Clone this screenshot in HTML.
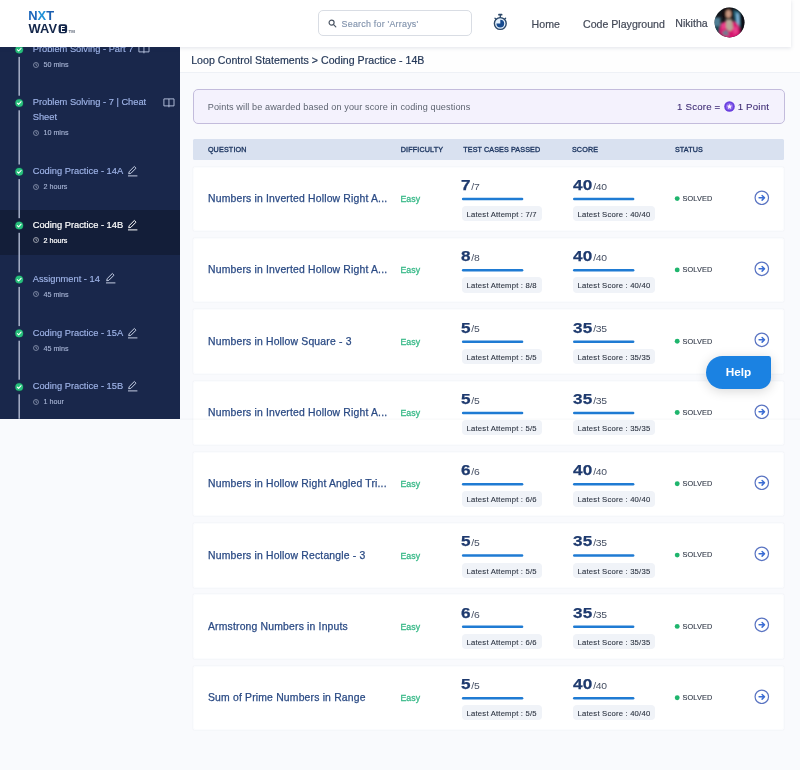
<!DOCTYPE html><html><head><meta charset="utf-8"><title>Coding Practice - 14B</title><style>
*{box-sizing:border-box;margin:0;padding:0}
html,body{width:800px;height:770px;overflow:hidden}
body{background:#f9fafd;font-family:"Liberation Sans",Arial,sans-serif;position:relative;color:#1e3a5f}
.abs{position:absolute}
#root{position:absolute;left:0;top:0;width:800px;height:770px;will-change:transform}
.nav{font-size:10.6px;color:#434957;white-space:nowrap;-webkit-text-stroke:.2px #434957}
#bread{left:0;top:0;width:800px;height:72.6px;background:#fefefe;border-bottom:1px solid #eef1f6}
#bread span{position:absolute;left:191.2px;top:53.8px;font-size:10.6px;color:#243757;white-space:nowrap;letter-spacing:.02px;-webkit-text-stroke:.18px #243757}
#hdr{left:0;top:0;width:791px;height:46.8px;background:#fff;box-shadow:0 1px 4px rgba(30,50,90,.13)}
#side{left:0;top:46px;width:180px;height:372.8px;background:#19274b;overflow:hidden}
#side .act{position:absolute;left:0;top:164.2px;width:180px;height:45.3px;background:#131e39}
#side .line{position:absolute;left:18.5px;width:1.4px;background:#a6b0c8}
.dot{position:absolute;left:15.3px;width:7.8px;height:7.8px;border-radius:50%;background:#27c07c;box-shadow:0 0 0 1px rgba(20,110,80,.55)}
.st{position:absolute;left:32.7px;font-size:9.3px;color:#9fb4e8;white-space:nowrap;line-height:15px}
.st{-webkit-text-stroke:.15px #9fb4e8}.st.on{color:#fff;-webkit-text-stroke:.2px #fff}
.tm{position:absolute;left:43.4px;font-size:7.2px;color:#a9b6d6;white-space:nowrap}
.tm{-webkit-text-stroke:.12px #a9b6d6}.tm.on{color:#fff;-webkit-text-stroke:.2px #fff}
#banner{left:192.7px;top:89.2px;width:592.2px;height:34.7px;background:#f4f2fd;border:1px solid #c3bcdc;border-radius:5px}
#banner .l{position:absolute;left:14.1px;top:12.2px;font-size:9.1px;color:#5d6470;white-space:nowrap;letter-spacing:.11px}
#banner .r{position:absolute;right:14.8px;top:10.8px;font-size:9.7px;color:#3f2d75;white-space:nowrap;letter-spacing:.18px;-webkit-text-stroke:.1px #3f2d75}
#th{left:192.7px;top:139px;width:591.5px;height:21px;background:#d9e1f0;border-radius:1.5px}
#th span{position:absolute;top:6.1px;font-size:7.2px;color:#1c3560;letter-spacing:.15px;white-space:nowrap;font-weight:400;-webkit-text-stroke:.32px #1c3560}
.row{position:absolute;left:192.7px;width:591.5px;height:64.5px;background:#fff;border:1px solid #fbfcfe;border-radius:2px;box-shadow:0 0 2px rgba(40,60,100,.07)}
.q{position:absolute;left:14.3px;top:25.6px;font-size:10.4px;color:#2a4a84;white-space:nowrap;letter-spacing:.18px;-webkit-text-stroke:.25px #2a4a84}
.easy{position:absolute;left:206.8px;top:26.5px;font-size:8.8px;color:#38b988;-webkit-text-stroke:.3px #38b988}
.big{position:absolute;top:7.4px;transform:scaleX(1.14);transform-origin:0 0;font-size:15px;font-weight:700;color:#1e3a6e;white-space:nowrap;line-height:19px;letter-spacing:.3px;-webkit-text-stroke:.25px #1e3a6e}
.big small{font-size:9.1px;font-weight:400;color:#454f63;letter-spacing:-.25px;position:relative;top:-.2px;margin-left:.4px;-webkit-text-stroke:0}
.bar{position:absolute;top:30.1px;height:2.5px;width:61.3px;background:#1f78cf;border-radius:2px}
.pill{position:absolute;top:38.6px;height:15.2px;background:#f0f3f8;border-radius:4px;font-size:7.7px;color:#2b3340;line-height:17px;padding:0 5px;white-space:nowrap;letter-spacing:.2px;-webkit-text-stroke:.1px #2b3340}
.sd{position:absolute;left:480.7px;top:28.6px;width:5px;height:5px;border-radius:50%;background:#1fb56d}
.sv{position:absolute;left:488.7px;top:26.4px;font-size:7.3px;color:#333b4a;letter-spacing:.15px;-webkit-text-stroke:.12px #333b4a}
.go{position:absolute;left:560.6px;top:22.1px;width:15.6px;height:15.6px}
#help{left:706px;top:355.7px;width:64.9px;height:33.2px;background:#1b82e2;border-radius:17px 2.5px 12px 17px;color:#fff;font-weight:700;font-size:11.8px;text-align:center;line-height:33.6px;box-shadow:0 2px 12px rgba(0,0,0,.16)}
</style></head><body><div id="root">
<div id="bread" class="abs"><span>Loop Control Statements &gt; Coding Practice - 14B</span></div>
<div id="side" class="abs"><div class="act"></div><svg class="abs" style="left:0;top:0" width="40" height="373" viewBox="0 0 40 373"><rect x="18.45" y="0.0" width="1.5" height="-3.7" fill="#a6b0c8"/><rect x="18.45" y="10.9" width="1.5" height="38.8" fill="#a6b0c8"/><rect x="18.45" y="64.3" width="1.5" height="54.2" fill="#a6b0c8"/><rect x="18.45" y="133.1" width="1.5" height="39.1" fill="#a6b0c8"/><rect x="18.45" y="186.8" width="1.5" height="39.5" fill="#a6b0c8"/><rect x="18.45" y="240.9" width="1.5" height="39.2" fill="#a6b0c8"/><rect x="18.45" y="294.7" width="1.5" height="39.0" fill="#a6b0c8"/><rect x="18.45" y="348.3" width="1.5" height="24.5" fill="#a6b0c8"/><circle cx="19.2" cy="3.6" r="4.5" fill="#145c4c" opacity=".55"/><circle cx="19.2" cy="3.6" r="3.85" fill="#27c07c"/><path d="M17.3 3.7l1.3 1.3 2.5-2.7" fill="none" stroke="#fff" stroke-width="1.05" stroke-linecap="round" stroke-linejoin="round"/><circle cx="19.2" cy="57.0" r="4.5" fill="#145c4c" opacity=".55"/><circle cx="19.2" cy="57.0" r="3.85" fill="#27c07c"/><path d="M17.3 57.1l1.3 1.3 2.5-2.7" fill="none" stroke="#fff" stroke-width="1.05" stroke-linecap="round" stroke-linejoin="round"/><circle cx="19.2" cy="125.8" r="4.5" fill="#145c4c" opacity=".55"/><circle cx="19.2" cy="125.8" r="3.85" fill="#27c07c"/><path d="M17.3 125.9l1.3 1.3 2.5-2.7" fill="none" stroke="#fff" stroke-width="1.05" stroke-linecap="round" stroke-linejoin="round"/><circle cx="19.2" cy="179.5" r="4.5" fill="#145c4c" opacity=".55"/><circle cx="19.2" cy="179.5" r="3.85" fill="#27c07c"/><path d="M17.3 179.6l1.3 1.3 2.5-2.7" fill="none" stroke="#fff" stroke-width="1.05" stroke-linecap="round" stroke-linejoin="round"/><circle cx="19.2" cy="233.6" r="4.5" fill="#145c4c" opacity=".55"/><circle cx="19.2" cy="233.6" r="3.85" fill="#27c07c"/><path d="M17.3 233.7l1.3 1.3 2.5-2.7" fill="none" stroke="#fff" stroke-width="1.05" stroke-linecap="round" stroke-linejoin="round"/><circle cx="19.2" cy="287.4" r="4.5" fill="#145c4c" opacity=".55"/><circle cx="19.2" cy="287.4" r="3.85" fill="#27c07c"/><path d="M17.3 287.5l1.3 1.3 2.5-2.7" fill="none" stroke="#fff" stroke-width="1.05" stroke-linecap="round" stroke-linejoin="round"/><circle cx="19.2" cy="341.0" r="4.5" fill="#145c4c" opacity=".55"/><circle cx="19.2" cy="341.0" r="3.85" fill="#27c07c"/><path d="M17.3 341.1l1.3 1.3 2.5-2.7" fill="none" stroke="#fff" stroke-width="1.05" stroke-linecap="round" stroke-linejoin="round"/></svg><div class="st" style="top:-4.0px">Problem Solving - Part 7</div><svg class="abs" style="left:33.2px;top:15.5px" width="6" height="6" viewBox="0 0 7 7" fill="none" stroke="#c4cde2" stroke-width="0.75" opacity=".85"><circle cx="3.5" cy="3.5" r="2.9"/><path d="M3.5 1.8V3.6L4.6 4.2"/></svg><div class="tm" style="top:13.9px">50 mins</div><svg class="abs" style="left:138px;top:-2.2px" width="12" height="11" viewBox="0 0 12 11" fill="none" stroke="#bcc7e2" stroke-width="0.9" shape-rendering="geometricPrecision"><path d="M0.9 0.9H11V7.9H0.9zM5.95 0.9V9.3"/></svg><div class="st" style="top:49.4px">Problem Solving - 7 | Cheat<br>Sheet</div><svg class="abs" style="left:33.2px;top:83.7px" width="6" height="6" viewBox="0 0 7 7" fill="none" stroke="#c4cde2" stroke-width="0.75" opacity=".85"><circle cx="3.5" cy="3.5" r="2.9"/><path d="M3.5 1.8V3.6L4.6 4.2"/></svg><div class="tm" style="top:82.1px">10 mins</div><svg class="abs" style="left:162.5px;top:51.8px" width="12" height="11" viewBox="0 0 12 11" fill="none" stroke="#bcc7e2" stroke-width="0.9" shape-rendering="geometricPrecision"><path d="M0.9 0.9H11V7.9H0.9zM5.95 0.9V9.3"/></svg><div class="st" style="top:118.2px">Coding Practice - 14A</div><svg class="abs" style="left:33.2px;top:137.7px" width="6" height="6" viewBox="0 0 7 7" fill="none" stroke="#c4cde2" stroke-width="0.75" opacity=".85"><circle cx="3.5" cy="3.5" r="2.9"/><path d="M3.5 1.8V3.6L4.6 4.2"/></svg><div class="tm" style="top:136.1px">2 hours</div><svg class="abs" style="left:127px;top:118.9px" width="11" height="12" viewBox="0 0 11 12" fill="none" stroke="#c4cde2" stroke-width="1" stroke-linejoin="round"><path d="M2.2 6.6 7.3 1.5 9 3.2 3.9 8.3 1.7 8.8z"/><path d="M1 10.9h9.4" /></svg><div class="st on" style="top:171.9px">Coding Practice - 14B</div><svg class="abs" style="left:33.2px;top:191.4px" width="6" height="6" viewBox="0 0 7 7" fill="none" stroke="#fff" stroke-width="0.75" opacity=".85"><circle cx="3.5" cy="3.5" r="2.9"/><path d="M3.5 1.8V3.6L4.6 4.2"/></svg><div class="tm on" style="top:189.8px">2 hours</div><svg class="abs" style="left:127px;top:172.6px" width="11" height="12" viewBox="0 0 11 12" fill="none" stroke="#fff" stroke-width="1" stroke-linejoin="round"><path d="M2.2 6.6 7.3 1.5 9 3.2 3.9 8.3 1.7 8.8z"/><path d="M1 10.9h9.4" /></svg><div class="st" style="top:225.6px">Assignment - 14</div><svg class="abs" style="left:33.2px;top:245.1px" width="6" height="6" viewBox="0 0 7 7" fill="none" stroke="#c4cde2" stroke-width="0.75" opacity=".85"><circle cx="3.5" cy="3.5" r="2.9"/><path d="M3.5 1.8V3.6L4.6 4.2"/></svg><div class="tm" style="top:243.5px">45 mins</div><svg class="abs" style="left:104.5px;top:226.3px" width="11" height="12" viewBox="0 0 11 12" fill="none" stroke="#c4cde2" stroke-width="1" stroke-linejoin="round"><path d="M2.2 6.6 7.3 1.5 9 3.2 3.9 8.3 1.7 8.8z"/><path d="M1 10.9h9.4" /></svg><div class="st" style="top:279.8px">Coding Practice - 15A</div><svg class="abs" style="left:33.2px;top:299.3px" width="6" height="6" viewBox="0 0 7 7" fill="none" stroke="#c4cde2" stroke-width="0.75" opacity=".85"><circle cx="3.5" cy="3.5" r="2.9"/><path d="M3.5 1.8V3.6L4.6 4.2"/></svg><div class="tm" style="top:297.7px">45 mins</div><svg class="abs" style="left:127px;top:280.5px" width="11" height="12" viewBox="0 0 11 12" fill="none" stroke="#c4cde2" stroke-width="1" stroke-linejoin="round"><path d="M2.2 6.6 7.3 1.5 9 3.2 3.9 8.3 1.7 8.8z"/><path d="M1 10.9h9.4" /></svg><div class="st" style="top:333.4px">Coding Practice - 15B</div><svg class="abs" style="left:33.2px;top:352.9px" width="6" height="6" viewBox="0 0 7 7" fill="none" stroke="#c4cde2" stroke-width="0.75" opacity=".85"><circle cx="3.5" cy="3.5" r="2.9"/><path d="M3.5 1.8V3.6L4.6 4.2"/></svg><div class="tm" style="top:351.3px">1 hour</div><svg class="abs" style="left:127px;top:334.1px" width="11" height="12" viewBox="0 0 11 12" fill="none" stroke="#c4cde2" stroke-width="1" stroke-linejoin="round"><path d="M2.2 6.6 7.3 1.5 9 3.2 3.9 8.3 1.7 8.8z"/><path d="M1 10.9h9.4" /></svg></div>
<div id="hdr" class="abs">
<svg class="abs" style="left:27px;top:10px" width="52" height="26" viewBox="0 0 52 26" font-family="Liberation Sans, Arial, sans-serif" font-weight="700">
<text x="1.3" y="9.9" font-size="12" textLength="25.8" lengthAdjust="spacingAndGlyphs" fill="#1b66bb">N<tspan fill="#2292d8">X</tspan><tspan fill="#1b5fb0">T</tspan></text>
<text x="1.6" y="22.8" font-size="12" textLength="28.4" lengthAdjust="spacingAndGlyphs" fill="#13264a">WAV</text>
<rect x="31.6" y="14.3" width="8.5" height="8.9" rx="2.2" fill="#13264a"/>
<text x="33.5" y="21.7" font-size="8.2" textLength="4.7" lengthAdjust="spacingAndGlyphs" fill="#fff">E</text>
<text x="41.5" y="22.8" font-size="3.4" textLength="6.3" lengthAdjust="spacingAndGlyphs" fill="#5a6475">TM</text>
</svg>
<div class="abs" style="left:318px;top:10px;width:153.5px;height:26.3px;border:1px solid #d9dde4;border-radius:5px;background:#fff"></div>
<svg class="abs" style="left:327.5px;top:18.7px" width="9" height="9" viewBox="0 0 9 9" fill="none" stroke="#4b5563" stroke-width="1.2" stroke-linecap="round"><circle cx="3.6" cy="3.6" r="2.5"/><path d="M5.6 5.6 7.8 7.8"/></svg>
<div class="abs" style="left:341.6px;top:18.8px;font-size:8.9px;color:#8394ad;white-space:nowrap;letter-spacing:.23px;-webkit-text-stroke:.15px #8394ad">Search for 'Arrays'</div>
<svg class="abs" style="left:492px;top:12px" width="17" height="20" viewBox="0 0 17 20"><circle cx="8.3" cy="11.5" r="5.9" fill="#e4f1fd" stroke="#2c4869" stroke-width="1.4"/><rect x="6.15" y="1.8" width="4.3" height="1.8" rx=".7" fill="#2c4869"/><path d="M8.3 3.2v2.2M3 6.2l1.2 1.2M13.6 6.2l-1.2 1.2" stroke="#2c4869" stroke-width="1.3" stroke-linecap="round" fill="none"/><path d="M8.3 11.6V7.7a3.9 3.9 0 1 1-3.9 3.9z" fill="#174b8f"/></svg>
<div class="abs nav" style="left:531.6px;top:17.6px">Home</div>
<div class="abs nav" style="left:583px;top:17.6px">Code Playground</div>
<div class="abs nav" style="left:675.3px;top:17.2px">Nikitha</div>
<svg class="abs" style="left:714.2px;top:6.5px" width="31" height="31" viewBox="0 0 31 31"><defs><clipPath id="av"><circle cx="15.5" cy="15.5" r="14.9"/></clipPath><filter id="bl" x="-20%" y="-20%" width="140%" height="140%"><feGaussianBlur stdDeviation="0.9"/></filter></defs><g clip-path="url(#av)"><rect width="31" height="31" fill="#11161b"/><g filter="url(#bl)"><rect x="-1" y="10.5" width="7.5" height="9" fill="#4f7d93"/><rect x="-1" y="19" width="7" height="8" fill="#1f4656"/><path d="M19.5 3 25.5 4.5 26.5 21 21 20z" fill="#2a6a82"/><path d="M22.3 6l2.6.8.5 11.2-2.4-.4z" fill="#86bce2"/><rect x="26.3" y="6" width="6" height="22" fill="#0b0e12"/><ellipse cx="14.3" cy="6.5" rx="5.4" ry="6.2" fill="#1a1110"/><ellipse cx="14.5" cy="7" rx="2.8" ry="4" fill="#c69680"/><path d="M5.5 27C5 18 8.5 14.2 12.5 14.2l5.5 0c5 0 8.5 5 8 14l-6 4H12z" fill="#d6186f"/><path d="M12 12.5h6l1.2 9.5-3.7 2.5-3.5-3.5z" fill="#b7a898"/><path d="M8 25l5-2.6 2.2 6H9.5z" fill="#5f8d98" opacity=".85"/><path d="M7 16.5l4-1.5 1 6-4 2z" fill="#e8408c"/><path d="M18.5 21l4.5-2 1 6-4 3z" fill="#e8408c"/></g></g></svg>
</div>
<div id="banner" class="abs"><div class="l">Points will be awarded based on your score in coding questions</div><div class="r">1 Score = <svg width="11" height="11" viewBox="0 0 11 11" style="vertical-align:-2.3px;margin-left:.5px"><circle cx="5.5" cy="5.5" r="5.3" fill="#6a40de"/><circle cx="5.5" cy="5.5" r="3.5" fill="#8c68ee"/><path d="M5.5 2.9l.8 1.7 1.8.2-1.3 1.3.3 1.8-1.6-.9-1.6.9.3-1.8L2.9 4.8l1.8-.2z" fill="#fdeeff"/></svg> 1 Point</div></div>
<div id="th" class="abs"><span style="left:15.2px">QUESTION</span><span style="left:208px">DIFFICULTY</span><span style="left:270.6px;letter-spacing:.1px">TEST CASES PASSED</span><span style="left:379.2px">SCORE</span><span style="left:482.2px">STATUS</span></div>
<div class="row" style="top:166.6px"><div class="q">Numbers in Inverted Hollow Right A...</div><div class="easy">Easy</div>
<div class="big" style="left:267.6px">7<small>/7</small></div><div class="pill" style="left:267.9px">Latest Attempt : 7/7</div>
<div class="big" style="left:379.3px">40<small>/40</small></div><div class="pill" style="left:378.9px">Latest Score : 40/40</div>
<div class="sv">SOLVED</div>
<svg class="go" viewBox="0 0 16 16" fill="none" stroke="#5a74c2" stroke-width="1.25" stroke-linecap="round" stroke-linejoin="round"><circle cx="8" cy="8" r="6.9"/><path d="M5.2 8h5.2M8.3 5.6 10.8 8 8.3 10.4" stroke="#3a6cd4" stroke-width="1.5"/></svg></div>
<div class="row" style="top:237.9px"><div class="q">Numbers in Inverted Hollow Right A...</div><div class="easy">Easy</div>
<div class="big" style="left:267.6px">8<small>/8</small></div><div class="pill" style="left:267.9px">Latest Attempt : 8/8</div>
<div class="big" style="left:379.3px">40<small>/40</small></div><div class="pill" style="left:378.9px">Latest Score : 40/40</div>
<div class="sv">SOLVED</div>
<svg class="go" viewBox="0 0 16 16" fill="none" stroke="#5a74c2" stroke-width="1.25" stroke-linecap="round" stroke-linejoin="round"><circle cx="8" cy="8" r="6.9"/><path d="M5.2 8h5.2M8.3 5.6 10.8 8 8.3 10.4" stroke="#3a6cd4" stroke-width="1.5"/></svg></div>
<div class="row" style="top:309.2px"><div class="q">Numbers in Hollow Square - 3</div><div class="easy">Easy</div>
<div class="big" style="left:267.6px">5<small>/5</small></div><div class="pill" style="left:267.9px">Latest Attempt : 5/5</div>
<div class="big" style="left:379.3px">35<small>/35</small></div><div class="pill" style="left:378.9px">Latest Score : 35/35</div>
<div class="sv">SOLVED</div>
<svg class="go" viewBox="0 0 16 16" fill="none" stroke="#5a74c2" stroke-width="1.25" stroke-linecap="round" stroke-linejoin="round"><circle cx="8" cy="8" r="6.9"/><path d="M5.2 8h5.2M8.3 5.6 10.8 8 8.3 10.4" stroke="#3a6cd4" stroke-width="1.5"/></svg></div>
<div class="row" style="top:380.5px"><div class="q">Numbers in Inverted Hollow Right A...</div><div class="easy">Easy</div>
<div class="big" style="left:267.6px">5<small>/5</small></div><div class="pill" style="left:267.9px">Latest Attempt : 5/5</div>
<div class="big" style="left:379.3px">35<small>/35</small></div><div class="pill" style="left:378.9px">Latest Score : 35/35</div>
<div class="sv">SOLVED</div>
<svg class="go" viewBox="0 0 16 16" fill="none" stroke="#5a74c2" stroke-width="1.25" stroke-linecap="round" stroke-linejoin="round"><circle cx="8" cy="8" r="6.9"/><path d="M5.2 8h5.2M8.3 5.6 10.8 8 8.3 10.4" stroke="#3a6cd4" stroke-width="1.5"/></svg></div>
<div class="row" style="top:451.8px"><div class="q">Numbers in Hollow Right Angled Tri...</div><div class="easy">Easy</div>
<div class="big" style="left:267.6px">6<small>/6</small></div><div class="pill" style="left:267.9px">Latest Attempt : 6/6</div>
<div class="big" style="left:379.3px">40<small>/40</small></div><div class="pill" style="left:378.9px">Latest Score : 40/40</div>
<div class="sv">SOLVED</div>
<svg class="go" viewBox="0 0 16 16" fill="none" stroke="#5a74c2" stroke-width="1.25" stroke-linecap="round" stroke-linejoin="round"><circle cx="8" cy="8" r="6.9"/><path d="M5.2 8h5.2M8.3 5.6 10.8 8 8.3 10.4" stroke="#3a6cd4" stroke-width="1.5"/></svg></div>
<div class="row" style="top:523.1px"><div class="q">Numbers in Hollow Rectangle - 3</div><div class="easy">Easy</div>
<div class="big" style="left:267.6px">5<small>/5</small></div><div class="pill" style="left:267.9px">Latest Attempt : 5/5</div>
<div class="big" style="left:379.3px">35<small>/35</small></div><div class="pill" style="left:378.9px">Latest Score : 35/35</div>
<div class="sv">SOLVED</div>
<svg class="go" viewBox="0 0 16 16" fill="none" stroke="#5a74c2" stroke-width="1.25" stroke-linecap="round" stroke-linejoin="round"><circle cx="8" cy="8" r="6.9"/><path d="M5.2 8h5.2M8.3 5.6 10.8 8 8.3 10.4" stroke="#3a6cd4" stroke-width="1.5"/></svg></div>
<div class="row" style="top:594.4px"><div class="q">Armstrong Numbers in Inputs</div><div class="easy">Easy</div>
<div class="big" style="left:267.6px">6<small>/6</small></div><div class="pill" style="left:267.9px">Latest Attempt : 6/6</div>
<div class="big" style="left:379.3px">35<small>/35</small></div><div class="pill" style="left:378.9px">Latest Score : 35/35</div>
<div class="sv">SOLVED</div>
<svg class="go" viewBox="0 0 16 16" fill="none" stroke="#5a74c2" stroke-width="1.25" stroke-linecap="round" stroke-linejoin="round"><circle cx="8" cy="8" r="6.9"/><path d="M5.2 8h5.2M8.3 5.6 10.8 8 8.3 10.4" stroke="#3a6cd4" stroke-width="1.5"/></svg></div>
<div class="row" style="top:665.7px"><div class="q">Sum of Prime Numbers in Range</div><div class="easy">Easy</div>
<div class="big" style="left:267.6px">5<small>/5</small></div><div class="pill" style="left:267.9px">Latest Attempt : 5/5</div>
<div class="big" style="left:379.3px">40<small>/40</small></div><div class="pill" style="left:378.9px">Latest Score : 40/40</div>
<div class="sv">SOLVED</div>
<svg class="go" viewBox="0 0 16 16" fill="none" stroke="#5a74c2" stroke-width="1.25" stroke-linecap="round" stroke-linejoin="round"><circle cx="8" cy="8" r="6.9"/><path d="M5.2 8h5.2M8.3 5.6 10.8 8 8.3 10.4" stroke="#3a6cd4" stroke-width="1.5"/></svg></div>
<svg class="abs" style="left:0;top:0;pointer-events:none" width="800" height="770" viewBox="0 0 800 770"><rect x="180" y="418.6" width="620" height="1" fill="#1e2b4a" opacity=".035"/><rect x="461.9" y="197.8" width="61.4" height="2.5" rx="1.25" fill="#1f7bd3"/><rect x="573.0" y="197.8" width="61.4" height="2.5" rx="1.25" fill="#1f7bd3"/><circle cx="677.2" cy="198.6" r="2.45" fill="#1fb56d"/><rect x="461.9" y="269.1" width="61.4" height="2.5" rx="1.25" fill="#1f7bd3"/><rect x="573.0" y="269.1" width="61.4" height="2.5" rx="1.25" fill="#1f7bd3"/><circle cx="677.2" cy="269.9" r="2.45" fill="#1fb56d"/><rect x="461.9" y="340.4" width="61.4" height="2.5" rx="1.25" fill="#1f7bd3"/><rect x="573.0" y="340.4" width="61.4" height="2.5" rx="1.25" fill="#1f7bd3"/><circle cx="677.2" cy="341.2" r="2.45" fill="#1fb56d"/><rect x="461.9" y="411.7" width="61.4" height="2.5" rx="1.25" fill="#1f7bd3"/><rect x="573.0" y="411.7" width="61.4" height="2.5" rx="1.25" fill="#1f7bd3"/><circle cx="677.2" cy="412.5" r="2.45" fill="#1fb56d"/><rect x="461.9" y="483.0" width="61.4" height="2.5" rx="1.25" fill="#1f7bd3"/><rect x="573.0" y="483.0" width="61.4" height="2.5" rx="1.25" fill="#1f7bd3"/><circle cx="677.2" cy="483.8" r="2.45" fill="#1fb56d"/><rect x="461.9" y="554.3" width="61.4" height="2.5" rx="1.25" fill="#1f7bd3"/><rect x="573.0" y="554.3" width="61.4" height="2.5" rx="1.25" fill="#1f7bd3"/><circle cx="677.2" cy="555.1" r="2.45" fill="#1fb56d"/><rect x="461.9" y="625.6" width="61.4" height="2.5" rx="1.25" fill="#1f7bd3"/><rect x="573.0" y="625.6" width="61.4" height="2.5" rx="1.25" fill="#1f7bd3"/><circle cx="677.2" cy="626.4" r="2.45" fill="#1fb56d"/><rect x="461.9" y="696.9" width="61.4" height="2.5" rx="1.25" fill="#1f7bd3"/><rect x="573.0" y="696.9" width="61.4" height="2.5" rx="1.25" fill="#1f7bd3"/><circle cx="677.2" cy="697.7" r="2.45" fill="#1fb56d"/></svg>
<div id="help" class="abs">Help</div>
</div></body></html>
